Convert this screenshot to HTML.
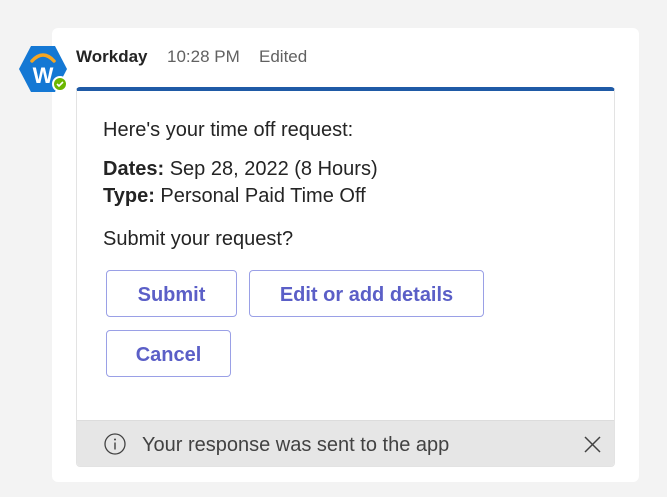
<!DOCTYPE html>
<html><head><style>
body{margin:0;width:667px;height:497px;background:#f3f3f3;font-family:"Liberation Sans",sans-serif;position:relative;overflow:hidden}
.bubble{position:absolute;left:52px;top:28px;width:587px;height:454px;background:#fff;border-radius:6px}
.hdr{position:absolute;top:47px;font-size:17px;color:#616161}
.card{position:absolute;left:76px;top:87px;width:539px;height:380px;background:#fff;border:1px solid #e3e3e3;border-top:4px solid #1f5aa6;border-radius:4px;box-sizing:border-box;overflow:hidden}
.t{position:absolute;left:26px;font-size:20px;color:#242424;white-space:nowrap}
.btn{position:absolute;height:47px;border:1px solid #9aa0e6;border-radius:4px;box-sizing:border-box;color:#5b5fc7;font-size:20px;font-weight:bold;display:flex;align-items:center;justify-content:center;background:#fff;padding-top:4px}
.foot{position:absolute;left:0;right:0;bottom:0;height:45px;background:#e6e6e6;border-top:1px solid #dcdcdc}
</style></head><body>
<div class="bubble"></div>
<svg style="position:absolute;left:18px;top:44px" width="54" height="50" viewBox="0 0 54 50">
<polygon points="13,2 37,2 49,25 37,48 13,48 1,25" fill="#1478d4"/>
<path d="M14 17 Q25 5 36 17" stroke="#f5a623" stroke-width="3.5" fill="none" stroke-linecap="round"/>
<text x="25" y="39" text-anchor="middle" font-family="Liberation Sans" font-weight="bold" font-size="22" fill="#fff">W</text>
<circle cx="42" cy="40" r="8" fill="#fff"/><circle cx="42" cy="40" r="6" fill="#6bb700"/>
<path d="M39 40 l2 2 l4 -4" stroke="#fff" stroke-width="1.6" fill="none"/>
</svg>
<div class="hdr" style="left:76px;color:#242424;font-weight:bold">Workday</div>
<div class="hdr" style="left:167px">10:28 PM</div>
<div class="hdr" style="left:259px">Edited</div>
<div class="card">
<div class="t" style="top:28px">Here's your time off request:</div>
<div class="t" style="top:67px"><b>Dates:</b> Sep 28, 2022 (8 Hours)</div>
<div class="t" style="top:94px"><b>Type:</b> Personal Paid Time Off</div>
<div class="t" style="top:137px">Submit your request?</div>
<div class="btn" style="left:29px;top:179px;width:131px">Submit</div>
<div class="btn" style="left:172px;top:179px;width:235px">Edit or add details</div>
<div class="btn" style="left:29px;top:239px;width:125px">Cancel</div>
<div class="foot">
<svg style="position:absolute;left:26px;top:11px" width="24" height="24" viewBox="0 0 24 24"><circle cx="12" cy="12" r="10" fill="none" stroke="#424242" stroke-width="1.3"/><circle cx="12" cy="7.5" r="1" fill="#424242"/><path d="M12 10.5v7" stroke="#424242" stroke-width="1.4"/></svg>
<div style="position:absolute;left:65px;top:13px;font-size:20px;color:#424242;white-space:nowrap">Your response was sent to the app</div>
<svg style="position:absolute;left:507px;top:15px" width="17" height="17" viewBox="0 0 17 17"><path d="M1 1L16 16M16 1L1 16" stroke="#424242" stroke-width="1.5"/></svg>
</div>
</div>
</body></html>
